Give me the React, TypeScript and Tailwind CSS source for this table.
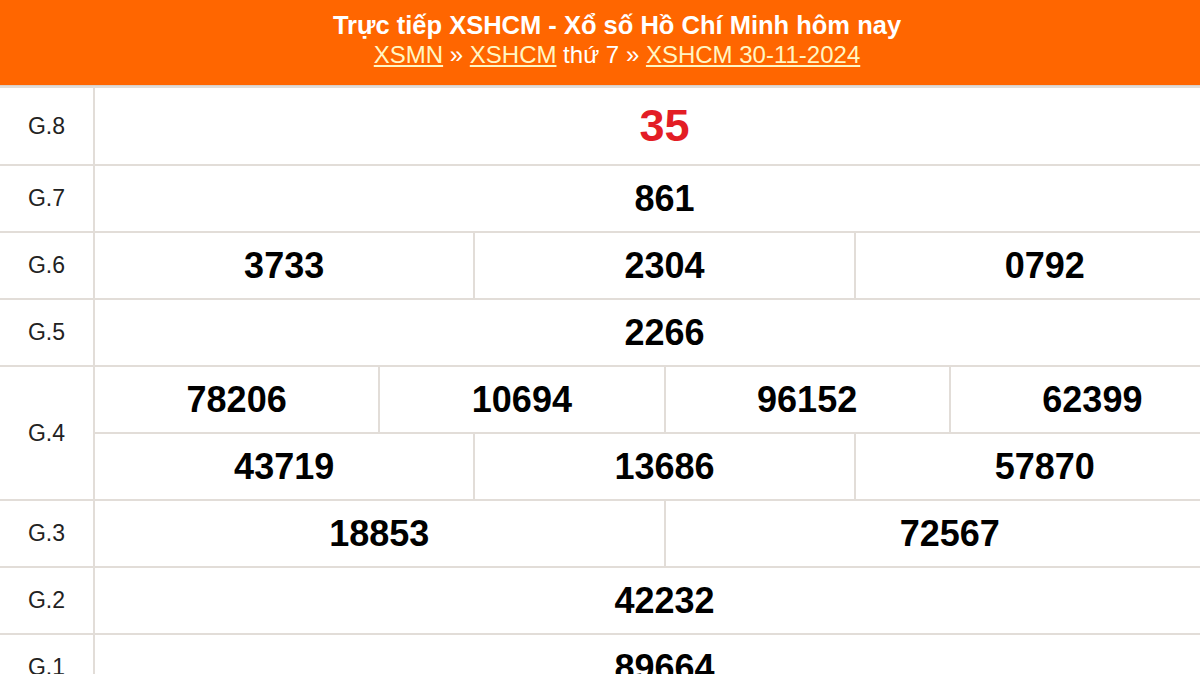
import React from 'react';

type Row = { label: string; lines: string[][]; tall?: boolean; red?: boolean };

const ROWS: Row[] = [
  { label: 'G.8', lines: [['35']], tall: true, red: true },
  { label: 'G.7', lines: [['861']] },
  { label: 'G.6', lines: [['3733', '2304', '0792']] },
  { label: 'G.5', lines: [['2266']] },
  { label: 'G.4', lines: [['78206', '10694', '96152', '62399'], ['43719', '13686', '57870']] },
  { label: 'G.3', lines: [['18853', '72567']] },
  { label: 'G.2', lines: [['42232']] },
  { label: 'G.1', lines: [['89664']] },
];

const App: React.FC = () => {
  return (
    <div className="w-[1200px] h-[674px] overflow-hidden bg-white" style={{ fontFamily: '"Liberation Sans", Arial, sans-serif' }}>
      <div className="w-[1234px]">
        <header className="h-[86px] bg-[#ff6600] text-white text-center pt-[10px] border-b border-[#d9d0c8]">
          <h1 className="text-[25.5px] leading-[30px] font-bold">Trực tiếp XSHCM - Xổ số Hồ Chí Minh hôm nay</h1>
          <p className="text-[24px] leading-[30px]">
            <a className="underline text-[#fff6c4]">XSMN</a> » <a className="underline text-[#fff6c4]">XSHCM</a> thứ 7 »{' '}
            <a className="underline text-[#fff6c4]">XSHCM 30-11-2024</a>
          </p>
        </header>

        <div className="border-t-2 border-[#e2ddd8]">
          {ROWS.map((row) => (
            <div key={row.label} className="flex border-b-2 border-[#e2ddd8]">
              <div className="w-[95px] shrink-0 flex items-center justify-center border-r-2 border-[#e2ddd8] text-[23px] text-[#222]">
                {row.label}
              </div>
              <div className="flex-1 flex flex-col">
                {row.lines.map((line, i) => (
                  <div
                    key={i}
                    className={`flex ${i > 0 ? 'border-t-2 border-[#e2ddd8] h-[67px]' : row.tall ? 'h-[76px]' : 'h-[65px]'}`}
                  >
                    {line.map((num, j) => (
                      <div
                        key={j}
                        className={`flex-1 flex items-center justify-center font-bold ${j > 0 ? 'border-l-2 border-[#e2ddd8]' : ''} ${
                          row.red ? 'text-[45px] text-[#e31d25]' : 'text-[36px] text-black'
                        }`}
                      >
                        {num}
                      </div>
                    ))}
                  </div>
                ))}
              </div>
            </div>
          ))}
        </div>
      </div>
    </div>
  );
};

export default App;
